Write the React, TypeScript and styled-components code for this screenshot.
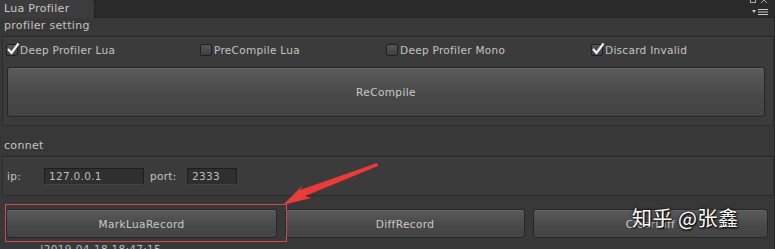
import React from "react";
import styled, { createGlobalStyle } from "styled-components";

const GlobalStyle = createGlobalStyle`
  html, body {
    margin: 0;
    padding: 0;
    background: #383838;
  }
`;

const Window = styled.div`
  position: relative;
  width: 775px;
  height: 249px;
  overflow: hidden;
  background: #383838;
  font-family: "DejaVu Sans", "Liberation Sans", sans-serif;
  font-size: 10.5px;
  letter-spacing: 0.3px;
  color: #c4c4c4;
  border-right: 1px solid #262626;
  box-sizing: border-box;
`;

const TabBar = styled.div`
  display: flex;
  justify-content: space-between;
  height: 18px;
  background: #2a2a2a;
  border-bottom: 1px solid #232323;
  box-sizing: border-box;
`;

const Tab = styled.div`
  width: 95px;
  height: 18px;
  padding: 2px 0 0 4px;
  box-sizing: border-box;
  background: #3c3c3c;
  border-right: 1px solid #222;
  border-top-right-radius: 3px;
  font-size: 11px;
  color: #c8c8c8;
`;

const TabIcons = styled.div`
  display: flex;
  flex-direction: column;
  align-items: flex-end;
  padding-right: 5px;
  margin-top: -4px;
`;

const Panel = styled.div`
  display: flex;
  flex-direction: column;
`;

const SectionLabel = styled.div<{ $top?: number }>`
  height: 16px;
  padding: ${(p) => p.$top ?? 0}px 0 0 4px;
  line-height: 16px;
  font-size: 11px;
`;

const Box = styled.div`
  margin: 2px 0 0 2px;
  border: 1px solid #2c2c2c;
  border-top-color: #262626;
  background: #3b3b3b;
  box-shadow: inset 0 1px 0 #444;
`;

const CheckRow = styled.div`
  display: grid;
  grid-template-columns: 194px 186px 205px 1fr;
  padding: 4px 0 0 3px;
  height: 18px;
`;

const CheckItem = styled.label`
  display: flex;
  align-items: center;
  gap: 2px;
  white-space: nowrap;
`;

const Check = styled.span`
  position: relative;
  width: 12px;
  height: 12px;
  border: 1px solid #202020;
  border-radius: 2px;
  background: linear-gradient(#555, #404040);
  box-sizing: border-box;
`;

const Button = styled.div<{ $tall?: boolean }>`
  display: flex;
  align-items: center;
  justify-content: center;
  height: ${(p) => (p.$tall ? 50 : 29)}px;
  border: 1px solid #262626;
  border-radius: 3px;
  background: linear-gradient(#5a5a5a, #484848 60%, #444);
  box-shadow: inset 0 1px 0 #666;
  box-sizing: border-box;
  color: #cacaca;
  letter-spacing: 0.4px;
`;

const ButtonWrap = styled.div`
  padding: 8px 8px 8px 4px;
`;

const FieldRow = styled.div`
  display: flex;
  align-items: center;
  height: 38px;
  padding-left: 4px;
`;

const FieldLabel = styled.span<{ $w: number }>`
  width: ${(p) => p.$w}px;
`;

const Input = styled.div<{ $w: number }>`
  width: ${(p) => p.$w}px;
  height: 17px;
  margin-right: 6px;
  padding-left: 4px;
  line-height: 15px;
  background: #2f2f2f;
  border: 1px solid #1e1e1e;
  border-bottom-color: #444;
  box-sizing: border-box;
  color: #bdbdbd;
`;

const ActionRow = styled.div`
  display: grid;
  grid-template-columns: 271px 240px 235px;
  column-gap: 8px;
  margin-top: 13px;
  padding-left: 6px;
`;

const Highlight = styled.div`
  position: absolute;
  left: 5px;
  top: 204px;
  width: 282px;
  height: 38px;
  border: 1px solid #d34a55;
  box-sizing: border-box;
`;

const Timestamp = styled.div`
  padding: 5px 0 0 40px;
  color: #bbb;
`;

const Overlay = styled.svg`
  position: absolute;
  left: 0;
  top: 0;
  pointer-events: none;
`;

const Watermark = styled.div`
  position: absolute;
  left: 632px;
  top: 203px;
  font-family: "Noto Sans CJK SC", "Noto Sans", sans-serif;
  font-size: 20px;
  color: #fff;
  text-shadow: 1px 1px 2px #000, 0 0 3px #000;
  letter-spacing: 0.5px;
`;

const CheckMark = () => (
  <svg width="14" height="13" viewBox="0 0 14 13" style={{ position: "absolute", left: -1, top: -3 }}>
    <path d="M2 7 L5.5 11 L12.5 1.5" stroke="#f2f2f2" strokeWidth="2.2" fill="none" />
  </svg>
);

const options = [
  { label: "Deep Profiler Lua", on: true },
  { label: "PreCompile Lua", on: false },
  { label: "Deep Profiler Mono", on: false },
  { label: "Discard Invalid", on: true },
];

export default function App() {
  return (
    <>
      <GlobalStyle />
      <Window>
        <TabBar>
          <Tab>Lua Profiler</Tab>
          <TabIcons>
            <svg width="22" height="9" viewBox="0 0 22 9">
              <rect x="3.5" y="2.5" width="5" height="4" stroke="#aaa" fill="none" />
              <path d="M14 1 L20 7 M20 1 L14 7" stroke="#aaa" strokeWidth="1" />
            </svg>
            <svg width="18" height="8" viewBox="0 0 18 8" style={{ marginTop: 3 }}>
              <path d="M1 2 L5 2 L3 5 Z" fill="#ccc" />
              <path d="M7 1.5 H17 M7 4 H17 M7 6.5 H17" stroke="#ccc" strokeWidth="1.2" />
            </svg>
          </TabIcons>
        </TabBar>
        <Panel>
          <SectionLabel>profiler setting</SectionLabel>
          <Box>
            <CheckRow>
              {options.map((o) => (
                <CheckItem key={o.label}>
                  <Check>{o.on && <CheckMark />}</Check>
                  {o.label}
                </CheckItem>
              ))}
            </CheckRow>
            <ButtonWrap>
              <Button $tall>ReCompile</Button>
            </ButtonWrap>
          </Box>
          <SectionLabel $top={12}>connet</SectionLabel>
          <Box>
            <FieldRow>
              <FieldLabel $w={37}>ip:</FieldLabel>
              <Input $w={100}>127.0.0.1</Input>
              <FieldLabel $w={37}>port:</FieldLabel>
              <Input $w={50}>2333</Input>
            </FieldRow>
          </Box>
          <ActionRow>
            <Button>MarkLuaRecord</Button>
            <Button>DiffRecord</Button>
            <Button>ClearDiff</Button>
          </ActionRow>
          <Timestamp>|2019-04-18 18:47:15</Timestamp>
        </Panel>
        <Highlight />
        <Overlay width="775" height="249">
          <path d="M377 163 L300 190 L303 185 L283 205 L311 198 L305 196 L378 166 Z" fill="#ec3a3a" />
        </Overlay>
        <Watermark>知乎 @张鑫</Watermark>
      </Window>
    </>
  );
}
